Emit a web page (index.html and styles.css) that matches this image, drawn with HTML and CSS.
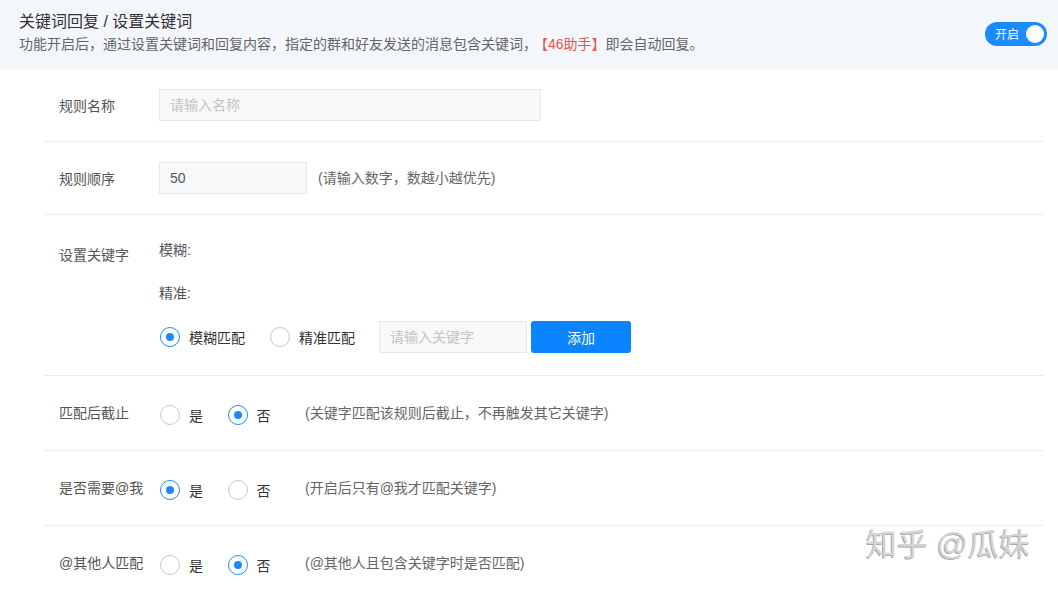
FILE: index.html
```html
<!DOCTYPE html>
<html lang="zh-CN">
<head>
  <meta charset="UTF-8">
  <title>设置关键词</title>
  <link rel="stylesheet" href="styles.css">
</head>
<body>
  <div class="header">
    <div class="header-text">
      <div class="title">关键词回复 / 设置关键词</div>
      <div class="desc">功能开启后，通过设置关键词和回复内容，指定的群和好友发送的消息包含关键词，<span class="red">【46助手】</span>即会自动回复。</div>
    </div>
    <div class="toggle"><span>开启</span><i class="knob"></i></div>
  </div>

  <div class="form">
    <div class="row">
      <div class="label">规则名称</div>
      <input class="input wide" type="text" placeholder="请输入名称">
    </div>

    <div class="row">
      <div class="label">规则顺序</div>
      <input class="input short" type="text" value="50">
      <span class="hint">(请输入数字，数越小越优先)</span>
    </div>

    <div class="row keywords">
      <div class="label">设置关键字</div>
      <div class="kw-body">
        <div class="kw-line">模糊:</div>
        <div class="kw-line">精准:</div>
        <div class="kw-add">
          <span class="radio checked"></span><span class="radio-text">模糊匹配</span>
          <span class="radio"></span><span class="radio-text">精准匹配</span>
          <input class="input kw-input" type="text" placeholder="请输入关键字">
          <button class="btn">添加</button>
        </div>
      </div>
    </div>

    <div class="row">
      <div class="label">匹配后截止</div>
      <div class="choices">
        <span class="radio"></span><span class="radio-text">是</span>
        <span class="radio checked"></span><span class="radio-text">否</span>
      </div>
      <span class="hint">(关键字匹配该规则后截止，不再触发其它关键字)</span>
    </div>

    <div class="row">
      <div class="label">是否需要@我</div>
      <div class="choices">
        <span class="radio checked"></span><span class="radio-text">是</span>
        <span class="radio"></span><span class="radio-text">否</span>
      </div>
      <span class="hint">(开启后只有@我才匹配关键字)</span>
    </div>

    <div class="row">
      <div class="label">@其他人匹配</div>
      <div class="choices">
        <span class="radio"></span><span class="radio-text">是</span>
        <span class="radio checked"></span><span class="radio-text">否</span>
      </div>
      <span class="hint">(@其他人且包含关键字时是否匹配)</span>
    </div>
  </div>

  <div class="watermark">知乎 @瓜妹</div>
</body>
</html>
```

FILE: styles.css
```css
body { margin: 0; font-family: "Liberation Sans", "Noto Sans CJK SC", sans-serif; font-size: 14px; color: #555; background: #fff; overflow: hidden; position: relative; height: 590px; }

.header { height: 69px; background: #f3f6fa; display: flex; align-items: center; justify-content: space-between; padding: 0 11px 0 19px; box-sizing: border-box; }
.header-text { padding-bottom: 3px; }
.title { font-size: 16px; color: #333; line-height: 22px; }
.desc { font-size: 14px; color: #666; line-height: 22px; }
.red { color: #e8574e; margin-left: 4px; }

.toggle { width: 62px; height: 24px; border-radius: 12px; background: #1a8cff; display: flex; align-items: center; justify-content: space-between; box-sizing: border-box; padding: 0 3px 0 10px; color: #fff; font-size: 12px; margin-top: -2px; }
.knob { width: 18px; height: 18px; border-radius: 50%; background: #fff; }

.form { margin: 0 15px 0 44px; }
.row { display: flex; align-items: center; padding: 20px 0; border-bottom: 1px solid #ebebeb; }
.label { width: 100px; padding-left: 15px; flex-shrink: 0; color: #555; }

.input { height: 32px; box-sizing: border-box; border: 1px solid #e6e8eb; background: #f7f8fa; padding: 0 10px; font: inherit; color: #555; outline: none; }
.input::placeholder { color: #c4c4c4; }
.wide { width: 382px; }
.short { width: 148px; }
.hint { color: #666; margin-left: 11px; margin-bottom: 2px; }

.keywords { align-items: flex-start; padding-bottom: 22px; }
.keywords .label { padding-top: 9px; }
.kw-line { height: 30px; line-height: 30px; margin-bottom: 13px; color: #555; }
.kw-add { display: flex; align-items: center; }
.kw-input { width: 148px; }
.btn { width: 100px; height: 32px; margin-left: 4px; border: 0; border-radius: 3px; background: #0a84ff; color: #fff; font: inherit; }

.choices { display: flex; align-items: center; height: 34px; width: 135px; }
.choices .radio { margin-top: 4px; }
.choices .radio-text { margin-top: 4px; width: 34px; margin-right: 13px; }
.choices + .hint, .choices ~ .hint { margin-bottom: 2px; }
.row .label:has(+ .choices) { margin-bottom: 3px; }

.radio { width: 20px; height: 20px; box-sizing: border-box; border-radius: 50%; border: 1px solid #c8c8c8; display: inline-flex; align-items: center; justify-content: center; flex-shrink: 0; margin-left: 1px; }
.radio.checked { border: 1.5px solid #1a8cff; }
.radio.checked::after { content: ""; width: 8px; height: 8px; border-radius: 50%; background: #1a8cff; }
.radio-text { margin-left: 9px; margin-right: 24px; color: #333; }

.watermark { position: absolute; right: 28px; bottom: 26px; font-size: 31px; color: #d4d4d4; text-shadow: -1px 1px 0 #a8a8a8; }
```
